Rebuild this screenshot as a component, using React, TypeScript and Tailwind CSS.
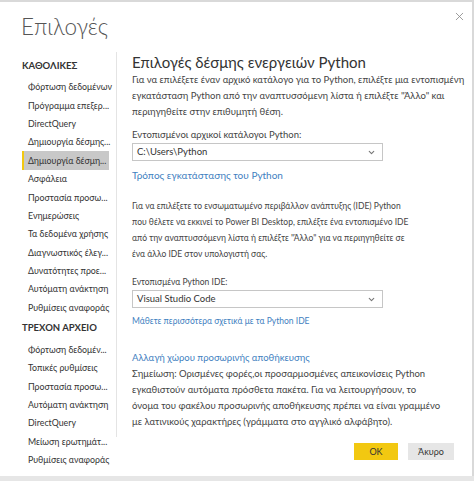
import { ChevronDown, X } from "lucide-react";

const general = [
  "Φόρτωση δεδομένων",
  "Πρόγραμμα επεξερ...",
  "DirectQuery",
  "Δημιουργία δέσμης...",
  "Δημιουργία δέσμη...",
  "Ασφάλεια",
  "Προστασία προσω...",
  "Ενημερώσεις",
  "Τα δεδομένα χρήσης",
  "Διαγνωστικός έλεγ...",
  "Δυνατότητες προε...",
  "Αυτόματη ανάκτηση",
  "Ρυθμίσεις αναφοράς",
];

const currentFile = [
  "Φόρτωση δεδομέν...",
  "Τοπικές ρυθμίσεις",
  "Προστασία προσω...",
  "Αυτόματη ανάκτηση",
  "DirectQuery",
  "Μείωση ερωτημάτ...",
  "Ρυθμίσεις αναφοράς",
];

function NavItem({ label, active }: { label: string; active?: boolean }) {
  return (
    <div
      className={`flex h-[18.4px] items-center whitespace-nowrap border-l-2 pl-[4px] text-[8.8px] text-[#333] ${
        active ? "border-[#f2c811] bg-[#c8c8c8]" : "border-transparent"
      }`}
    >
      {label}
    </div>
  );
}

function NavHeader({ children }: { children: string }) {
  return (
    <div className="flex h-[23.6px] items-center whitespace-nowrap text-[9.5px] font-bold text-[#333]">
      {children}
    </div>
  );
}

function Select({ value }: { value: string }) {
  return (
    <div className="flex h-[18px] w-[251px] items-center justify-between border border-[#c6c6c6] bg-white pl-[4px] pr-[6px] text-[9.5px] text-[#333]">
      <span>{value}</span>
      <ChevronDown size={9} strokeWidth={3} className="text-[#777]" />
    </div>
  );
}

function Lines({ lines, className }: { lines: string[]; className?: string }) {
  return (
    <div className={className}>
      {lines.map((l) => (
        <div key={l} className="whitespace-nowrap">
          {l}
        </div>
      ))}
    </div>
  );
}

export default function App() {
  return (
    <div
      className="flex h-[481px] w-[474px] flex-col overflow-hidden bg-[#e6e6e6]"
      style={{ fontFamily: 'Lato, "Noto Sans", sans-serif' }}
    >
      <div className="relative flex min-h-0 flex-1 flex-col overflow-hidden border-r-2 border-t-2 border-[#d9d9d9] bg-white">
        <button className="absolute right-[6px] top-[8px] text-[#888]">
          <X size={13} strokeWidth={1.5} />
        </button>
        <h1 className="pl-[21px] pt-[10px] text-[22.5px] font-light leading-[30px] text-[#555]">
          Επιλογές
        </h1>
        <div className="mt-[10px] flex min-h-0 flex-1">
          <div className="w-[116px] shrink-0 pl-[22px] pr-[7px] pt-[2px]">
            <NavHeader>ΚΑΘΟΛΙΚΕΣ</NavHeader>
            {general.map((l, i) => (
              <NavItem key={l + i} label={l} active={i === 4} />
            ))}
            <NavHeader>ΤΡΕΧΟΝ ΑΡΧΕΙΟ</NavHeader>
            {currentFile.map((l, i) => (
              <NavItem key={l + i} label={l} />
            ))}
          </div>
          <div className="flex flex-1 flex-col">
            <div className="flex h-[385px] flex-col border-l border-[#e4e4e4] pl-[15px] text-[9.5px] leading-[16px] text-[#444]">
              <h2 className="text-[15px] leading-[20px] text-[#333]">
                Επιλογές δέσμης ενεργειών Python
              </h2>
              <Lines
                lines={[
                  "Για να επιλέξετε έναν αρχικό κατάλογο για το Python, επιλέξτε μια εντοπισμένη",
                  'εγκατάσταση Python από την αναπτυσσόμενη λίστα ή επιλέξτε "Άλλο" και',
                  "περιηγηθείτε στην επιθυμητή θέση.",
                ]}
              />
              <div className="mt-[7px]">Εντοπισμένοι αρχικοί κατάλογοι Python:</div>
              <Select value="C:\Users\Python" />
              <a className="mt-[6px] text-[10px] text-[#3f7fbf]">Τρόπος εγκατάστασης του Python</a>
              <Lines
                className="mt-[15px] text-[8.5px]"
                lines={[
                  "Για να επιλέξετε το ενσωματωμένο περιβάλλον ανάπτυξης (IDE) Python",
                  "που θέλετε να εκκινεί το Power BI Desktop, επιλέξτε ένα εντοπισμένο IDE",
                  'από την αναπτυσσόμενη λίστα ή επιλέξτε "Άλλο" για να περιηγηθείτε σε',
                  "ένα άλλο IDE στον υπολογιστή σας.",
                ]}
              />
              <div className="mt-[12px] text-[8.5px]">Εντοπισμένα Python IDE:</div>
              <Select value="Visual Studio Code" />
              <a className="mt-[5px] text-[8.5px] text-[#3f7fbf]">
                Μάθετε περισσότερα σχετικά με τα Python IDE
              </a>
              <a className="mt-[21px] text-[#3f7fbf]">Αλλαγή χώρου προσωρινής αποθήκευσης</a>
              <Lines
                lines={[
                  "Σημείωση: Ορισμένες φορές,οι προσαρμοσμένες απεικονίσεις Python",
                  "εγκαθιστούν αυτόματα πρόσθετα πακέτα. Για να λειτουργήσουν, το",
                  "όνομα του φακέλου προσωρινής αποθήκευσης πρέπει να είναι γραμμένο",
                  "με λατινικούς χαρακτήρες (γράμματα στο αγγλικό αλφάβητο).",
                ]}
              />
            </div>
            <div className="mt-[6px] flex justify-end gap-[10px] pr-[18px] text-[9px]">
              <button className="h-[17px] w-[44px] bg-[#f2c811] text-[#333]">OK</button>
              <button className="h-[17px] w-[46px] bg-[#e6e6e6] text-[#333]">Άκυρο</button>
            </div>
          </div>
        </div>
      </div>
      <div className="h-[5px] shrink-0" />
    </div>
  );
}
